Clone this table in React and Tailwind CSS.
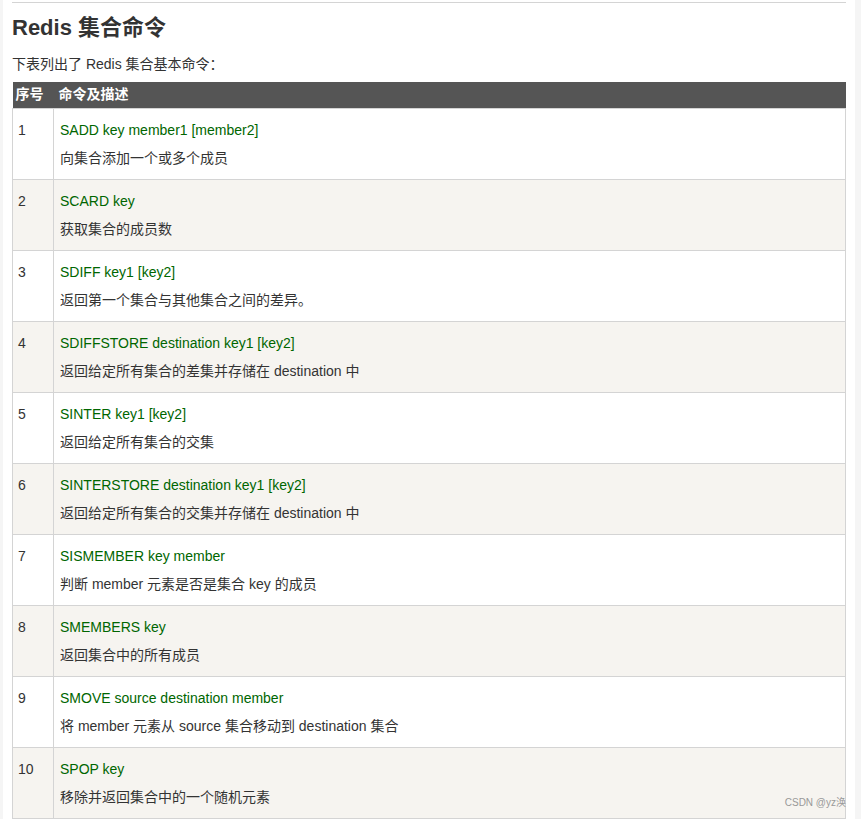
import React from "react";

const ROWS = [
  ["SADD key member1 [member2]", "向集合添加一个或多个成员"],
  ["SCARD key", "获取集合的成员数"],
  ["SDIFF key1 [key2]", "返回第一个集合与其他集合之间的差异。"],
  ["SDIFFSTORE destination key1 [key2]", "返回给定所有集合的差集并存储在 destination 中"],
  ["SINTER key1 [key2]", "返回给定所有集合的交集"],
  ["SINTERSTORE destination key1 [key2]", "返回给定所有集合的交集并存储在 destination 中"],
  ["SISMEMBER key member", "判断 member 元素是否是集合 key 的成员"],
  ["SMEMBERS key", "返回集合中的所有成员"],
  ["SMOVE source destination member", "将 member 元素从 source 集合移动到 destination 集合"],
  ["SPOP key", "移除并返回集合中的一个随机元素"],
];

const FONT = {
  fontFamily: '"Liberation Sans", Arial, "Noto Sans CJK SC", sans-serif',
};

const App = () => {
  return (
    <div className="flex w-[861px] h-[819px] overflow-hidden bg-white" style={FONT}>
      <div className="w-[3px] shrink-0 bg-[#f5f5f5]" />
      <div className="relative flex-1 pl-[9px] pr-[9px]">
        <div className="mt-[2px] h-px bg-[#d4d4d4]" />
        <h2 className="mt-[13px] text-[22px] leading-[24px] font-bold text-[#333]">Redis 集合命令</h2>
        <p className="mt-[14px] text-[14px] leading-[20px] text-[#333]">下表列出了 Redis 集合基本命令：</p>
        <table className="mt-[8px] w-full border-collapse text-[14px] text-[#333]">
          <thead>
            <tr className="bg-[#555] text-white">
              <th className="w-[41px] h-[26px] pl-[3px] text-left font-bold">序号</th>
              <th className="pl-[5px] text-left font-bold">命令及描述</th>
            </tr>
          </thead>
          <tbody>
            {ROWS.map(([cmd, desc], i) => (
              <tr key={cmd} className={i % 2 === 1 ? "bg-[#f6f4f0]" : "bg-white"}>
                <td className="border border-[#d4d4d4] pl-[5px] pt-[7px] pb-[8px] align-top leading-[28px]">
                  {i + 1}
                </td>
                <td className="border border-[#d4d4d4] pl-[6px] pt-[7px] pb-[7px] align-top leading-[28px]">
                  <div className="text-[#006600]">{cmd}</div>
                  <div>{desc}</div>
                </td>
              </tr>
            ))}
          </tbody>
        </table>
        <span className="absolute right-[9px] top-[797px] text-[10px] leading-[12px] text-[#999]">CSDN @yz涣</span>
      </div>
      <div className="w-[6px] shrink-0 bg-[#f5f5f5]" />
    </div>
  );
};

export default App;
